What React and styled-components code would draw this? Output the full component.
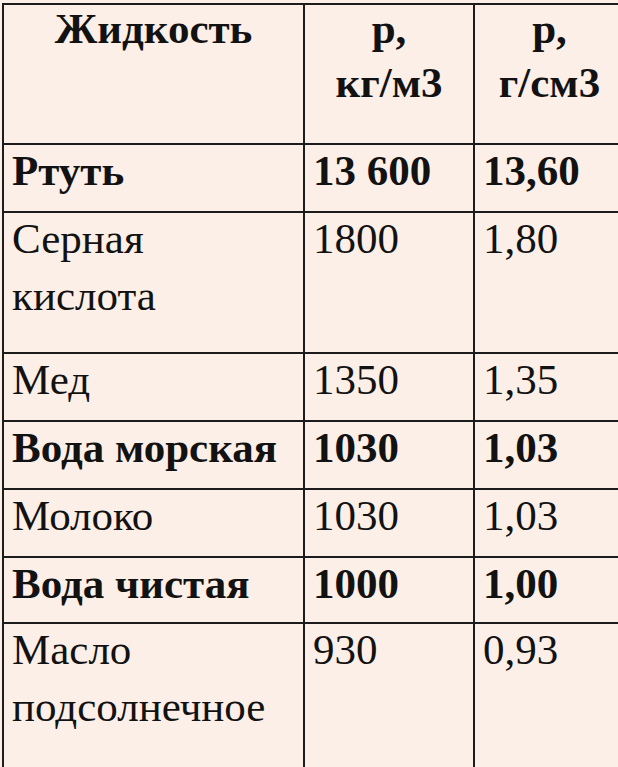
import styled, { createGlobalStyle } from "styled-components";

const GlobalStyle = createGlobalStyle`
  html, body {
    margin: 0;
    padding: 0;
    background: #fcefe7;
    overflow: hidden;
  }
`;

const Page = styled.div`
  padding: 3px 0 0 2px;
  width: 640px;
  height: 767px;
  overflow: hidden;
`;

const Table = styled.table`
  border-collapse: collapse;
  table-layout: fixed;
  width: 622px;
  font-family: "Liberation Serif", "Times New Roman", serif;
  font-size: 43px;
  color: #121212;
  background: #fcefe7;
`;

const Col = styled.col`
  width: ${(p) => p.$w}px;
`;

const Row = styled.tr`
  height: ${(p) => p.$h}px;
`;

const HeadCell = styled.th`
  border: 2px solid #1c1c1c;
  vertical-align: top;
  text-align: center;
  font-weight: bold;
  line-height: 54px;
  padding: 0 6px;
`;

const HeadText = styled.div`
  margin-top: -3px;
`;

const Cell = styled.td`
  border: 2px solid #1c1c1c;
  vertical-align: top;
  text-align: left;
  font-weight: ${(p) => (p.$bold ? "bold" : "normal")};
  line-height: 57px;
  padding: 0 8px;
  white-space: nowrap;
`;

const CellText = styled.div`
  margin-top: -3px;
`;

const rows = [
  { name: ["Ртуть"], kg: "13 600", g: "13,60", bold: true, h: 68 },
  { name: ["Серная", "кислота"], kg: "1800", g: "1,80", h: 141 },
  { name: ["Мед"], kg: "1350", g: "1,35", h: 68 },
  { name: ["Вода морская"], kg: "1030", g: "1,03", bold: true, h: 68 },
  { name: ["Молоко"], kg: "1030", g: "1,03", h: 68 },
  { name: ["Вода чистая"], kg: "1000", g: "1,00", bold: true, h: 66 },
  { name: ["Масло", "подсолнечное"], kg: "930", g: "0,93", h: 160 },
];

export default function App() {
  return (
    <Page>
      <GlobalStyle />
      <Table>
        <colgroup>
          <Col $w={301} />
          <Col $w={170} />
          <Col $w={151} />
        </colgroup>
        <tbody>
          <Row $h={140}>
            <HeadCell>
              <HeadText>Жидкость</HeadText>
            </HeadCell>
            <HeadCell>
              <HeadText>
                р,
                <br />
                кг/м3
              </HeadText>
            </HeadCell>
            <HeadCell>
              <HeadText>
                р,
                <br />
                г/см3
              </HeadText>
            </HeadCell>
          </Row>
          {rows.map((r) => (
            <Row key={r.name.join(" ")} $h={r.h}>
              <Cell $bold={r.bold}>
                <CellText>
                  {r.name.map((line, i) => (
                    <div key={i}>{line}</div>
                  ))}
                </CellText>
              </Cell>
              <Cell $bold={r.bold}>
                <CellText>{r.kg}</CellText>
              </Cell>
              <Cell $bold={r.bold}>
                <CellText>{r.g}</CellText>
              </Cell>
            </Row>
          ))}
        </tbody>
      </Table>
    </Page>
  );
}
